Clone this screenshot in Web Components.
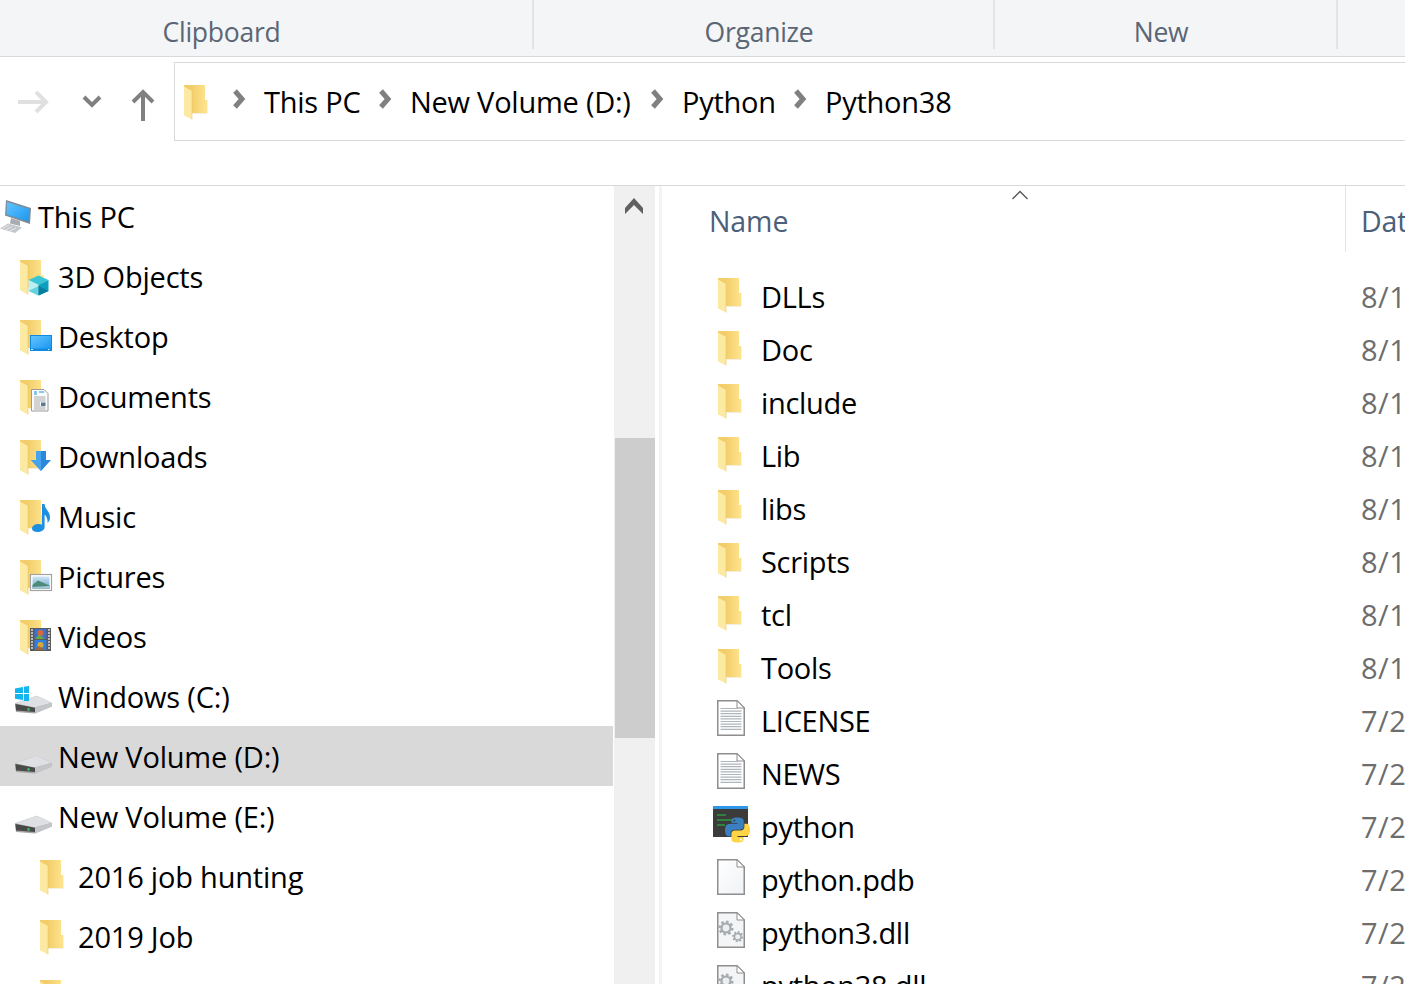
<!DOCTYPE html>
<html lang="en"><head><meta charset="utf-8"><title>Python38</title>
<style>
html,body{margin:0;padding:0;width:1405px;height:984px;overflow:hidden;background:#fff;font-family:"Open Sans","Noto Sans",sans-serif;}
</style></head><body>
<fx-explorer>
  <fx-ribbon slot="ribbon">
    <fx-ribbon-group w="534" pad="89">Clipboard</fx-ribbon-group>
    <fx-ribbon-group w="461" pad="9">Organize</fx-ribbon-group>
    <fx-ribbon-group w="343" pad="9">New</fx-ribbon-group>
  </fx-ribbon>
  <fx-address slot="address">
    <fx-crumb w="146">This PC</fx-crumb>
    <fx-crumb w="272">New Volume (D:)</fx-crumb>
    <fx-crumb w="143">Python</fx-crumb>
    <fx-crumb w="160" last>Python38</fx-crumb>
  </fx-address>
  <fx-nav-pane slot="nav">
    <fx-nav-item level="0" icon="pc">This PC</fx-nav-item>
    <fx-nav-item level="1" icon="f3d">3D Objects</fx-nav-item>
    <fx-nav-item level="1" icon="fdesk">Desktop</fx-nav-item>
    <fx-nav-item level="1" icon="fdoc">Documents</fx-nav-item>
    <fx-nav-item level="1" icon="fdown">Downloads</fx-nav-item>
    <fx-nav-item level="1" icon="fmusic">Music</fx-nav-item>
    <fx-nav-item level="1" icon="fpic">Pictures</fx-nav-item>
    <fx-nav-item level="1" icon="fvid">Videos</fx-nav-item>
    <fx-nav-item level="1" icon="cdrive">Windows (C:)</fx-nav-item>
    <fx-nav-item level="1" icon="drive" selected>New Volume (D:)</fx-nav-item>
    <fx-nav-item level="1" icon="drive">New Volume (E:)</fx-nav-item>
    <fx-nav-item level="2" icon="folder">2016 job hunting</fx-nav-item>
    <fx-nav-item level="2" icon="folder">2019 Job</fx-nav-item>
    <fx-nav-item level="2" icon="folder"></fx-nav-item>
  </fx-nav-pane>
  <fx-scrollbar slot="scroll"></fx-scrollbar>
  <fx-file-list slot="files">
    <fx-file-row icon="lfolder" date="8/1">DLLs</fx-file-row>
    <fx-file-row icon="lfolder" date="8/1">Doc</fx-file-row>
    <fx-file-row icon="lfolder" date="8/1">include</fx-file-row>
    <fx-file-row icon="lfolder" date="8/1">Lib</fx-file-row>
    <fx-file-row icon="lfolder" date="8/1">libs</fx-file-row>
    <fx-file-row icon="lfolder" date="8/1">Scripts</fx-file-row>
    <fx-file-row icon="lfolder" date="8/1">tcl</fx-file-row>
    <fx-file-row icon="lfolder" date="8/1">Tools</fx-file-row>
    <fx-file-row icon="text" date="7/2">LICENSE</fx-file-row>
    <fx-file-row icon="text" date="7/2">NEWS</fx-file-row>
    <fx-file-row icon="python" date="7/2">python</fx-file-row>
    <fx-file-row icon="blank" date="7/2">python.pdb</fx-file-row>
    <fx-file-row icon="dll" date="7/2">python3.dll</fx-file-row>
    <fx-file-row icon="dll" date="7/2">python38.dll</fx-file-row>
  </fx-file-list>
</fx-explorer>
<script>
const FONT='"Open Sans","Noto Sans",sans-serif';
function shadow(el,html){const r=el.attachShadow({mode:'open'});r.innerHTML=html;return r;}
const folderAt=(x,y)=>`<g transform="translate(${x} ${y})">
<path d="M0 0H21V15H23.4V28H8V34L0 30Z" fill="url(#fb)"/>
<path d="M0 1.5L8 6V34.5L0 30Z" fill="#fdeaa2"/>
<path d="M8 6V34.5" stroke="#e9c765" stroke-width=".6"/>
<path d="M8 28H23.4V29H8Z" fill="#efe7cf" opacity=".7"/></g>`;
const DEFS=`<defs><linearGradient id="fb" x1="0" x2="1" y1="0" y2="0"><stop offset=".3" stop-color="#f2cd69"/><stop offset="1" stop-color="#ffe48f"/></linearGradient>
<linearGradient id="bl" x1="0" x2="1" y1="0" y2="1"><stop offset="0" stop-color="#62c4ff"/><stop offset="1" stop-color="#1b97f0"/></linearGradient>
<linearGradient id="sky" x1="0" x2="0" y1="0" y2="1"><stop offset="0" stop-color="#cfe6f7"/><stop offset="1" stop-color="#6ea6c9"/></linearGradient>
<linearGradient id="pg" x1="0" x2="1" y1="0" y2="1"><stop offset="0" stop-color="#fff"/><stop offset="1" stop-color="#eff2f5"/></linearGradient></defs>`;
const driveAt=`<path d="M-5 37.3L16.7 29.7L31.7 36.7V40.5L15 47.5L-4 46Z" fill="#a8a8a8"/>
<path d="M-5 37.3L16.7 29.7L31.7 36.7L15 41.5Z" fill="#dfe0e3"/>
<path d="M-4.6 38L15 41.8V46L-4 44.4Z" fill="#4a4a4a"/>
<path d="M15 41.5L31.7 36.7V40.5L15 47.5Z" fill="#c4c5c8"/>
<rect x="7.4" y="42.3" width="2.2" height="2.2" fill="#3fd35a"/>`;
const doc=(x,y,fill)=>`<path d="M${x+.75} ${y+.75}H${x+20}L${x+27.25} ${y+8}V${y+35.25}H${x+.75}Z" fill="${fill}" stroke="#8e8e8e" stroke-width="1.5"/>
<path d="M${x+20} ${y+.75}V${y+8}H${x+27.25}Z" fill="#fff" stroke="#8e8e8e" stroke-width="1"/>`;
const gear=(cx,cy,r)=>{let t='';for(let i=0;i<8;i++){const a=i*Math.PI/4+.2;t+=`<line x1="${cx+Math.cos(a)*r*.7}" y1="${cy+Math.sin(a)*r*.7}" x2="${cx+Math.cos(a)*r}" y2="${cy+Math.sin(a)*r}" stroke="#a4a8ac" stroke-width="${r*.36}"/>`;}
return t+`<circle cx="${cx}" cy="${cy}" r="${r*.6}" fill="#eceef0" stroke="#a4a8ac" stroke-width="${r*.28}"/>`;};
const PY="M54.9 0C26.9 0 28.6 12.1 28.6 12.1l0 12.6h26.7v3.8H18C18 28.5 0 26.4 0 54.8s15.7 27.4 15.7 27.4h9.4V69s-.5-15.7 15.4-15.7h26.6s14.9.2 14.9-14.4V14.8S84.3 0 54.9 0zM40.1 8.5a4.8 4.8 0 1 1 0 9.6 4.8 4.8 0 0 1 0-9.6z";
const ICONS={
folder:folderAt(0,14),
pc:`<path d="M11 32L20 35V40L10 37.5Z" fill="#a8adb3"/><path d="M0 42.5L8 37.5L22 41.5L15 47Z" fill="#c3c6ca"/>
<path d="M2.5 42.5L9 39M5.5 44L12 40.5M9 45.5L16 42" stroke="#eceef0" stroke-width=".9"/>
<path d="M6 14L31 22L30 38L5 29.5Z" fill="#7d8b96"/><path d="M7 16L29 23L28.5 35.5L6.5 28.5Z" fill="url(#bl)"/>`,
f3d:folderAt(0,14)+`<path d="M18.5 29.5L28.5 34L18.5 39L8.5 34Z" fill="#38c6d6"/><path d="M8.5 34L18.5 39V49.5L8.5 45Z" fill="#bdeff2"/><path d="M28.5 34L18.5 39V49.5L28.5 45Z" fill="#0d9fc0"/><path d="M8.5 45L18.5 40V49.5Z" fill="#63d3de"/><path d="M28.5 45L18.5 40V49.5Z" fill="#067f9f"/>`,
fdesk:folderAt(0,14)+`<rect x="10" y="29" width="22" height="16" fill="#1089e3"/><rect x="11" y="30" width="20" height="12.5" fill="url(#bl)"/><path d="M11 43.5H13M28 43.5H29.5" stroke="#cfe9ff"/>`,
fdoc:folderAt(0,14)+`<path d="M11.5 23.5H24L28 27.5V45H11.5Z" fill="#fbfcfd" stroke="#9a9a9a"/>
<path d="M14 26H17M14 28H17M19 26H24" stroke="#1b8ed8" stroke-width="1.2"/><path d="M14 31H25.5M14 33H25.5M14 35H25.5M14 37H20M14 39H20M14 41H25.5M14 43H25.5" stroke="#a9a9a9" stroke-width="1"/><rect x="21" y="36.5" width="4.5" height="3.5" fill="#5b7c92"/>`,
fdown:folderAt(0,14)+`<path d="M16 25H26V34H31L21 45L11 34H16Z" fill="#2b87dc"/><path d="M16 25H21V45L11 34H16Z" fill="#46a3ee"/>`,
fmusic:folderAt(0,14)+`<path d="M22 18H24.6C25 24 30 25 30 31.5C30 34 29 35.5 27.5 37C28 33.5 26.5 30 24.6 28.5V41C24.6 44.5 21 46 17.5 46C14 46 12 44.5 12 42.5C12 40 15 38 18.5 38C20 38 21.2 38.3 22 38.8Z" fill="#1b8fe3"/>`,
fpic:folderAt(0,14)+`<rect x="10.5" y="28.5" width="21" height="16" fill="#fff" stroke="#a3a3a3" stroke-width="1.2"/><rect x="12.5" y="30.5" width="17" height="12" fill="url(#sky)"/><path d="M12.5 39L18 34.5L29.5 39.5V42.5H12.5Z" fill="#4f8a78"/><path d="M12.5 41L29.5 40V42.5H12.5Z" fill="#a8c9dc"/>`,
fvid:folderAt(0,14)+`<rect x="10" y="22" width="21" height="23" fill="#5b5b5b"/><path d="M11 24H13M11 27H13M11 30H13M11 33H13M11 36H13M11 39H13M11 42H13M28 24H30M28 27H30M28 30H30M28 33H30M28 36H30M28 39H30M28 42H30" stroke="#ddd" stroke-width="1.4"/>
<rect x="14.5" y="23" width="12" height="10" fill="#3f6fd0"/><rect x="14.5" y="34" width="12" height="10" fill="#2f7fe0"/><circle cx="20.5" cy="27" r="3" fill="#d76a3a"/><circle cx="20.5" cy="39" r="3" fill="#d6a83a"/><path d="M15 33L19 28.5L25 33Z" fill="#6a4" /><path d="M15 44L19 40L25 44Z" fill="#a63"/>`,
cdrive:driveAt+`<path d="M-5 22.5L3 21V27H-5ZM4 20.8L9 20V27H4ZM-5 28H3V34L-5 32.8ZM4 28H9V35H4Z" fill="#12b5ee"/>`,
drive:driveAt,
lfolder:folderAt(1,7),
text:doc(0,5,'#fff')+`<path d="M3.5 13.5H21M3.5 16.1H24.5M3.5 18.7H24.5M3.5 21.3H24.5M3.5 23.9H24.5M3.5 26.5H24.5M3.5 29.1H24.5M3.5 31.7H24.5M3.5 34.3H24.5" stroke="#b0b5ba" stroke-width="1.2"/>`,
blank:doc(0,5,'url(#pg)'),
dll:doc(0,5,'#f3f5f7')+gear(9,21,7.5)+gear(20.7,29.7,5.5),
python:`<rect x="-4" y="5" width="35" height="31" fill="#3b3b3b"/><rect x="-4" y="5" width="35" height="3" fill="#2f97e8"/>
<path d="M0 14H9M0 19H17M0 24H8" stroke="#2d9b3f" stroke-width="1.4"/>
<g transform="translate(8 16.5) scale(.228)"><path fill-rule="evenodd" d="${PY}" fill="#3a7fc0"/><path fill-rule="evenodd" d="${PY}" fill="#fdd545" transform="rotate(180 55 55)"/></g>`
};
customElements.define('fx-icon',class extends HTMLElement{connectedCallback(){if(this.shadowRoot)return;
 const w=this.getAttribute('w')||38,h=this.getAttribute('h')||60;
 shadow(this,`<style>:host{display:block;width:${w}px;height:${h}px;flex:none}svg{display:block;overflow:visible}</style>
 <svg width="${w}" height="${h}" viewBox="0 0 ${w} ${h}" xmlns="http://www.w3.org/2000/svg">${DEFS}${ICONS[this.getAttribute('name')]||''}</svg>`);}});
customElements.define('fx-explorer',class extends HTMLElement{constructor(){super();shadow(this,`<style>
 :host{display:grid;width:1405px;height:984px;overflow:hidden;grid-template-columns:614px 41px 4px 3px 1fr;grid-template-rows:57px 129px 1fr;font-family:${FONT};}
 .r{grid-column:1/-1}.g1{background:#fff}.g2{background:#f3f3f3}
 </style><div class="r"><slot name="ribbon"></slot></div><div class="r"><slot name="address"></slot></div>
 <slot name="nav"></slot><slot name="scroll"></slot><div class="g1"></div><div class="g2"></div><slot name="files"></slot>`);}});
customElements.define('fx-ribbon',class extends HTMLElement{constructor(){super();shadow(this,`<style>:host{display:flex;height:56px;background:#f4f5f7;border-bottom:1px solid #d9d9d9}</style><slot></slot>`);}});
customElements.define('fx-ribbon-group',class extends HTMLElement{connectedCallback(){if(this.shadowRoot)return;
 shadow(this,`<style>:host{display:block;box-sizing:border-box;width:${this.getAttribute('w')}px;height:49px;padding-right:${this.getAttribute('pad')}px;border-right:2px solid #e2e3e5;text-align:center;font-size:26.5px;line-height:64px;color:#5a6675;letter-spacing:-.25px;white-space:nowrap}</style><slot></slot>`);}});
customElements.define('fx-address',class extends HTMLElement{constructor(){super();shadow(this,`<style>
 :host{display:flex;height:128px;border-bottom:1px solid #d9d9d9;box-sizing:content-box;align-items:flex-start}
 .nav{width:174px;height:78px;margin-top:5px;flex:none}
 .box{flex:1;display:flex;height:79px;margin-top:5px;border:solid #d9d9d9;border-width:1px 0 1px 1px;box-sizing:border-box;align-items:flex-start}
 .f{width:57px;height:76px;flex:none;}
 svg{display:block;overflow:visible}
 </style><div class="nav"><svg width="174" height="78" viewBox="0 0 174 78">
 <path d="M18 40H45M36 30L46 40L36 50" fill="none" stroke="#e0e0e0" stroke-width="4"/>
 <path d="M84 35L92 43L100 35" fill="none" stroke="#808080" stroke-width="4"/>
 <path d="M143 59V31M133 40L143 30L153 40" fill="none" stroke="#808080" stroke-width="4"/></svg></div>
 <div class="box"><div class="f"><svg width="58" height="76" viewBox="0 0 58 76">${DEFS}${folderAt(9,22)}</svg></div><slot></slot></div>`);}});
customElements.define('fx-crumb',class extends HTMLElement{connectedCallback(){if(this.shadowRoot)return;
 shadow(this,`<style>:host{display:flex;align-items:center;height:76px;width:${this.getAttribute('w')}px;flex:none;font-size:29px;color:#000;letter-spacing:-.25px;white-space:nowrap}
 span{display:block;width:32px;flex:none}svg{display:block}</style>
 <span><svg width="14" height="20" viewBox="0 0 14 20" style="margin-top:-4px"><path d="M3 2L10 10L3 18" fill="none" stroke="#808080" stroke-width="5"/></svg></span><slot></slot>`);}});
customElements.define('fx-nav-pane',class extends HTMLElement{constructor(){super();shadow(this,`<style>:host{display:block;height:798px;overflow:hidden;margin-right:1px}</style><slot></slot>`);}});
customElements.define('fx-nav-item',class extends HTMLElement{connectedCallback(){if(this.shadowRoot)return;
 const lv=+this.getAttribute('level');
 shadow(this,`<style>:host{display:flex;height:60px;align-items:center;padding-left:${lv*20}px;font-size:29px;letter-spacing:-.2px;color:#000;white-space:nowrap;background:${this.hasAttribute('selected')?'#d9d9d9':'transparent'}}
 .t{margin-top:1px}</style><fx-icon name="${this.getAttribute('icon')}"></fx-icon><span class="t"><slot></slot></span>`);}});
customElements.define('fx-scrollbar',class extends HTMLElement{constructor(){super();shadow(this,`<style>:host{display:flex;flex-direction:column;height:798px;background:#f0f0f0;}
 svg{display:block;margin:12px 0 0 11px;flex:none}.th{height:300px;background:#cdcdcd;margin-top:224px;margin-left:1px;flex:none}</style>
 <svg width="18" height="16" viewBox="0 0 18 16"><path d="M0 10L9 0L18 10V16L9 7L0 16Z" fill="#606060"/></svg><div class="th"></div>`);}});
customElements.define('fx-file-list',class extends HTMLElement{constructor(){super();shadow(this,`<style>
 :host{display:block;height:798px;overflow:hidden;position:relative;font-size:29px}
 .hd{display:flex;height:85px;color:#4c607a;font-size:28.5px;letter-spacing:-.1px;white-space:nowrap}
 .n{width:683px;flex:none;box-sizing:border-box;padding:15px 0 0 47px;line-height:40px;position:relative}
 .n svg{position:absolute;left:349px;top:4px}
 .sep{width:1px;height:66px;background:#e5e5e5;flex:none}
 .d{padding:15px 0 0 15px;line-height:40px;}
 </style><div class="hd"><div class="n">Name<svg width="18" height="10" viewBox="0 0 18 10"><path d="M1.5 9L9 1.5L16.5 9" fill="none" stroke="#555" stroke-width="1.3"/></svg></div><div class="sep"></div><div class="d">Dat</div></div><slot></slot>`);}});
customElements.define('fx-file-row',class extends HTMLElement{connectedCallback(){if(this.shadowRoot)return;
 shadow(this,`<style>:host{display:flex;height:53px;align-items:center;padding-left:55px;letter-spacing:-.3px;color:#000;white-space:nowrap}
 .t{width:600px;margin-top:-3px;flex:none}.d{color:#6d6d6d;margin-top:-3px;letter-spacing:.5px}</style>
 <fx-icon name="${this.getAttribute('icon')}" w="44" h="53"></fx-icon><span class="t"><slot></slot></span><span class="d">${this.getAttribute('date')}</span>`);}});
</script>
</body></html>
